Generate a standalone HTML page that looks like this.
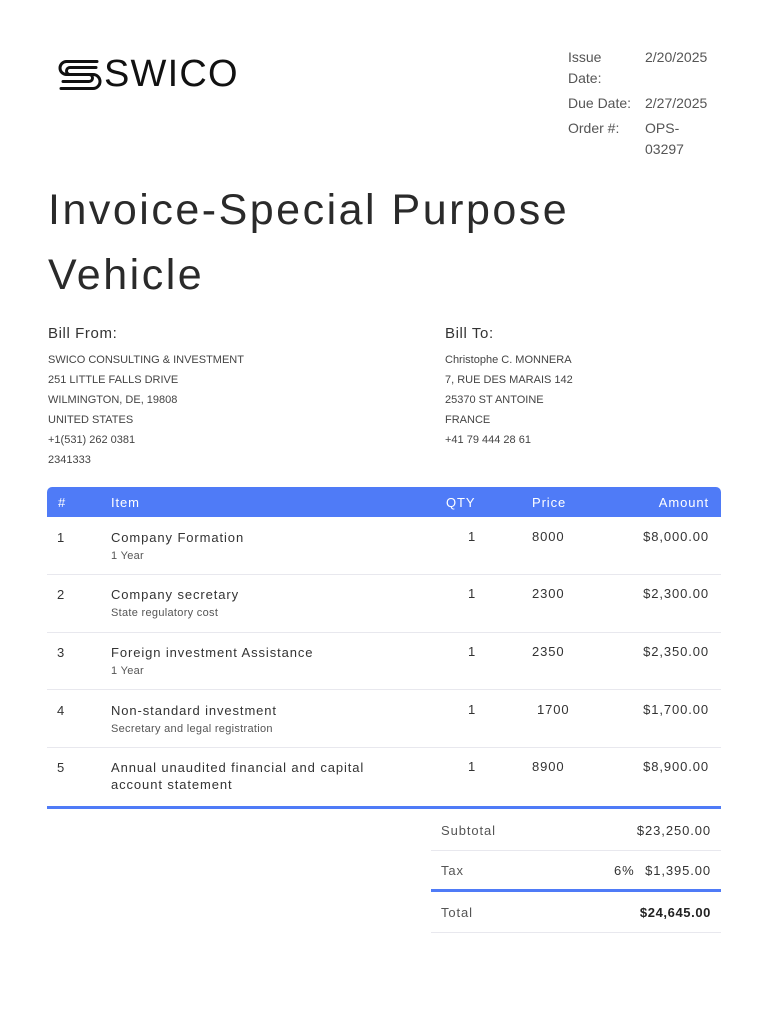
<!DOCTYPE html>
<html><head><meta charset="utf-8"><style>
body{margin:0;width:768px;height:1024px;background:#fff;font-family:"Liberation Sans",sans-serif;color:#333;position:relative;overflow:hidden}
.a{position:absolute;white-space:nowrap}
.s{font-size:11px;color:#444}
.m{font-size:14px;color:#555}
.r{text-align:right}
.t{font-size:13px;letter-spacing:0.9px}
.hr{position:absolute;height:1px;background:#e8e8ee}
</style></head><body>
<svg class="a" style="left:58px;top:59px" width="44" height="34" viewBox="0 0 44 34" fill="none" stroke="#111" stroke-width="3" stroke-linecap="round">
<path d="M39 2.5H8.5a6.5 6.5 0 0 0 0 13H35a7 7 0 0 1 0 14H3"/>
<path d="M38 8.5H12a3.5 3.5 0 0 0 0 7M31 15.5a3.5 3.5 0 0 1 0 7H5"/>
</svg>
<div class="a" style="left:104px;top:53px;font-size:38px;letter-spacing:1.2px;color:#111">SWICO</div>

<div class="a m" style="left:568px;top:49px">Issue</div>
<div class="a m" style="left:568px;top:70px">Date:</div>
<div class="a m" style="left:645px;top:49px">2/20/2025</div>
<div class="a m" style="left:568px;top:95px">Due Date:</div>
<div class="a m" style="left:645px;top:95px">2/27/2025</div>
<div class="a m" style="left:568px;top:120px">Order #:</div>
<div class="a m" style="left:645px;top:120px">OPS-</div>
<div class="a m" style="left:645px;top:141px">03297</div>

<div class="a" style="left:48px;top:186px;font-size:43px;letter-spacing:2.5px;color:#2a2a2a">Invoice-Special Purpose</div>
<div class="a" style="left:48px;top:251px;font-size:43px;letter-spacing:2.5px;color:#2a2a2a">Vehicle</div>

<div class="a" style="left:48px;top:325px;font-size:15px;letter-spacing:0.6px">Bill From:</div>
<div class="a s" style="left:48px;top:350px;line-height:20px">SWICO CONSULTING &amp; INVESTMENT<br>251 LITTLE FALLS DRIVE<br>WILMINGTON, DE, 19808<br>UNITED STATES<br>+1(531) 262 0381<br>2341333</div>
<div class="a" style="left:445px;top:325px;font-size:15px;letter-spacing:0.6px">Bill To:</div>
<div class="a s" style="left:445px;top:350px;line-height:20px">Christophe C. MONNERA<br>7, RUE DES MARAIS 142<br>25370 ST ANTOINE<br>FRANCE<br>+41 79 444 28 61</div>

<div class="a" style="left:47px;top:487px;width:674px;height:30px;background:#4f7bf7;border-radius:5px 5px 0 0"></div>
<div class="a t" style="left:58px;top:495px;color:#fff">#</div>
<div class="a t" style="left:111px;top:495px;color:#fff">Item</div>
<div class="a t" style="left:446px;top:495px;color:#fff">QTY</div>
<div class="a t" style="left:532px;top:495px;color:#fff">Price</div>
<div class="a r t" style="left:600px;width:109px;top:495px;color:#fff">Amount</div>

<div class="a t" style="left:57px;top:529px;line-height:17px">1</div>
<div class="a t" style="left:111px;top:529px;line-height:17px">Company Formation<br><span style="font-size:11px;color:#555;letter-spacing:0.3px">1 Year</span></div>
<div class="a t" style="left:468px;top:529px">1</div>
<div class="a t" style="left:532px;top:529px">8000</div>
<div class="a r t" style="left:590px;width:119px;top:529px">$8,000.00</div>
<div class="hr" style="left:47px;width:674px;top:574px"></div>

<div class="a t" style="left:57px;top:586px;line-height:17px">2</div>
<div class="a t" style="left:111px;top:586px;line-height:17px">Company secretary<br><span style="font-size:11px;color:#555;letter-spacing:0.3px">State regulatory cost</span></div>
<div class="a t" style="left:468px;top:586px">1</div>
<div class="a t" style="left:532px;top:586px">2300</div>
<div class="a r t" style="left:590px;width:119px;top:586px">$2,300.00</div>
<div class="hr" style="left:47px;width:674px;top:632px"></div>

<div class="a t" style="left:57px;top:644px;line-height:17px">3</div>
<div class="a t" style="left:111px;top:644px;line-height:17px">Foreign investment Assistance<br><span style="font-size:11px;color:#555;letter-spacing:0.3px">1 Year</span></div>
<div class="a t" style="left:468px;top:644px">1</div>
<div class="a t" style="left:532px;top:644px">2350</div>
<div class="a r t" style="left:590px;width:119px;top:644px">$2,350.00</div>
<div class="hr" style="left:47px;width:674px;top:689px"></div>

<div class="a t" style="left:57px;top:702px;line-height:17px">4</div>
<div class="a t" style="left:111px;top:702px;line-height:17px">Non-standard investment<br><span style="font-size:11px;color:#555;letter-spacing:0.3px">Secretary and legal registration</span></div>
<div class="a t" style="left:468px;top:702px">1</div>
<div class="a t" style="left:537px;top:702px">1700</div>
<div class="a r t" style="left:590px;width:119px;top:702px">$1,700.00</div>
<div class="hr" style="left:47px;width:674px;top:747px"></div>

<div class="a t" style="left:57px;top:759px;line-height:17px">5</div>
<div class="a t" style="left:111px;top:759px;line-height:17px">Annual unaudited financial and capital<br>account statement</div>
<div class="a t" style="left:468px;top:759px">1</div>
<div class="a t" style="left:532px;top:759px">8900</div>
<div class="a r t" style="left:590px;width:119px;top:759px">$8,900.00</div>
<div class="a" style="left:47px;width:674px;top:806px;height:3px;background:#4f7bf7"></div>

<div class="a t" style="left:441px;top:823px;color:#555">Subtotal</div>
<div class="a r t" style="left:560px;width:151px;top:823px">$23,250.00</div>
<div class="hr" style="left:431px;width:290px;top:850px"></div>
<div class="a t" style="left:441px;top:863px;color:#555">Tax</div>
<div class="a t" style="left:614px;top:863px">6%</div>
<div class="a r t" style="left:630px;width:81px;top:863px">$1,395.00</div>
<div class="a" style="left:431px;width:290px;top:889px;height:3px;background:#4f7bf7"></div>
<div class="a t" style="left:441px;top:905px;color:#555">Total</div>
<div class="a r t" style="left:560px;width:151px;top:905px;font-weight:bold;color:#222;letter-spacing:0.6px">$24,645.00</div>
<div class="hr" style="left:431px;width:290px;top:932px"></div>
</body></html>
